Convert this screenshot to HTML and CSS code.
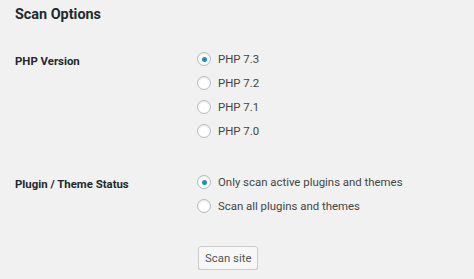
FILE: index.html
```html
<!DOCTYPE html>
<html>
<head>
<meta charset="utf-8">
<link rel="stylesheet" href="styles.css">
</head>
<body>
<div class="wrap">
  <h2 class="title">Scan Options</h2>
  <div class="row row-php">
    <div class="label">PHP Version</div>
    <div class="options">
      <label class="opt"><span class="radio checked"></span>PHP 7.3</label>
      <label class="opt"><span class="radio"></span>PHP 7.2</label>
      <label class="opt"><span class="radio"></span>PHP 7.1</label>
      <label class="opt"><span class="radio"></span>PHP 7.0</label>
    </div>
  </div>
  <div class="row row-status">
    <div class="label">Plugin / Theme Status</div>
    <div class="options">
      <label class="opt"><span class="radio checked"></span>Only scan active plugins and themes</label>
      <label class="opt"><span class="radio"></span>Scan all plugins and themes</label>
    </div>
  </div>
  <div class="actions">
    <button class="btn">Scan site</button>
  </div>
</div>
</body>
</html>
```
FILE: styles.css
```css
html, body {
  margin: 0;
  padding: 0;
  background: #f1f1f1;
  font-family: Roboto, "Liberation Sans", sans-serif;
  color: #444;
}
.wrap {
  padding: 5px 0 0 15px;
  display: flex;
  flex-direction: column;
}
.title {
  margin: 0;
  font-size: 14.4px;
  font-weight: 700;
  color: #23282d;
  line-height: 20px;
}
.row {
  display: grid;
  grid-template-columns: 182px 1fr;
  align-items: start;
}
.row-php {
  margin-top: 22px;
}
.row-status {
  margin-top: 27px;
}
.label {
  font-size: 11.4px;
  font-weight: 700;
  color: #23282d;
  line-height: 24px;
  padding-top: 2px;
}
.options {
  display: flex;
  flex-direction: column;
}
.opt {
  display: flex;
  align-items: center;
  height: 24px;
  font-size: 11.4px;
  color: #444;
}
.radio {
  box-sizing: border-box;
  width: 14px;
  height: 14px;
  border: 1px solid #b4b9be;
  border-radius: 50%;
  background: #fff;
  box-shadow: inset 0 1px 2px rgba(0,0,0,0.1);
  margin-right: 7px;
  display: flex;
  align-items: center;
  justify-content: center;
}
.radio.checked::after {
  content: "";
  width: 5px;
  height: 5px;
  border-radius: 50%;
  background: #1e8cbe;
}
.actions {
  padding-left: 183px;
  margin-top: 28px;
}
.btn {
  font-family: Roboto, "Liberation Sans", sans-serif;
  font-size: 11.4px;
  color: #555;
  background: #f7f7f7;
  border: 1px solid #ccc;
  border-radius: 3px;
  box-shadow: 0 1px 0 #ccc;
  height: 24px;
  padding: 0 6px;
  line-height: 22px;
}
```
